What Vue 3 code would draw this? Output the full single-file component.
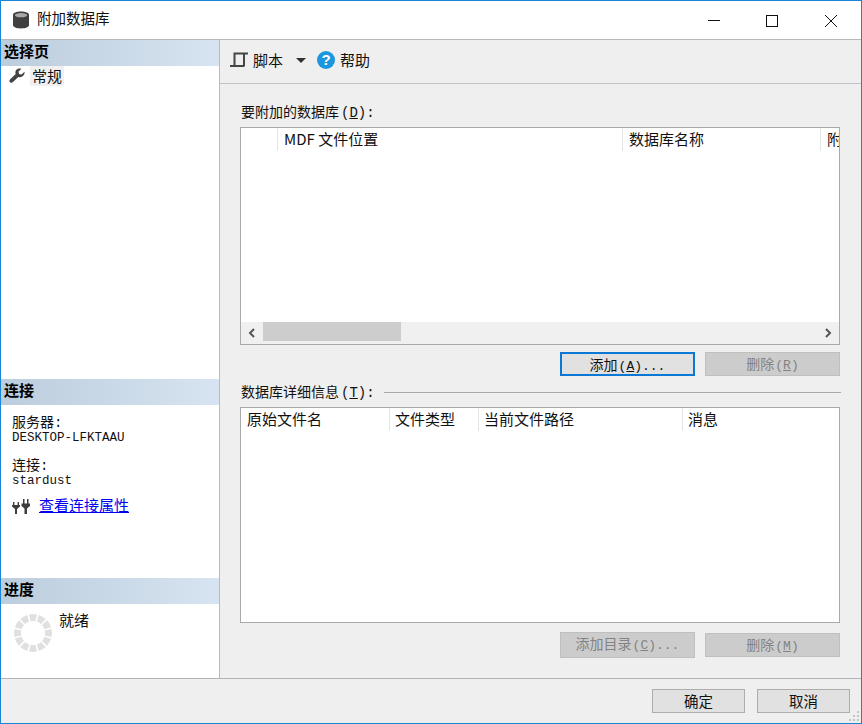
<script setup>
const files = [
  { name: '', w: 37 },
  { name: 'MDF 文件位置', w: 345 },
  { name: '数据库名称', w: 198 },
  { name: '附加为', w: 60 }
]
const details = [
  { name: '原始文件名', w: 149 },
  { name: '文件类型', w: 89 },
  { name: '当前文件路径', w: 204 },
  { name: '消息', w: 170 }
]
const segments = Array.from({ length: 12 }, (_, i) => i * 30)
</script>

<template>
  <div class="window">
    <header class="titlebar">
      <svg class="db-icon" width="18" height="18" viewBox="0 0 18 18">
        <path d="M1 4C1 1.800 4.600.6 9 .6s8 1.200 8 3.400v10c0 2.200-3.600 3.400-8 3.400s-8-1.200-8-3.400z" fill="#404040" />
        <ellipse cx="9" cy="4.200" rx="6.200" ry="2.100" fill="#a8a8a8" />
      </svg>
      <span class="title-text">附加数据库</span>
      <div class="win-controls">
        <svg class="ctl" width="46" height="38" viewBox="0 0 46 38"><path d="M17 19.500h12" stroke="#111" fill="none" /></svg>
        <svg class="ctl ctl-max" width="46" height="38" viewBox="0 0 46 38"><rect x="17.500" y="14.500" width="11" height="11" stroke="#111" fill="none" /></svg>
        <svg class="ctl ctl-close" width="46" height="38" viewBox="0 0 46 38"><path d="M17 14l12 12M29 14l-12 12" stroke="#111" fill="none" /></svg>
      </div>
    </header>

    <div class="body">
      <aside class="sidebar">
        <section class="side-sec sec-pages">
          <h2 class="side-head">选择页</h2>
          <div class="page-item">
            <svg width="16" height="16" viewBox="0 0 16 16">
              <path d="M15.500 3.800 12.500 6.400 10 6 9.600 3.500 12.400.8C10.300 0 8.200.5 7.100 2 6.300 3.200 6.200 4.700 6.700 5.900L1.200 11.200c-1 1-1 2.200-.2 3s2 .8 3-.2L9.300 9c1.300.5 2.800.3 4-.5C15 7.300 16 5.400 15.500 3.800z" fill="#444" />
            </svg>
            <span class="page-name">常规</span>
          </div>
        </section>

        <section class="side-sec sec-conn">
          <h2 class="side-head">连接</h2>
          <div class="conn-body">
            <div class="conn-label">服务器<span class="mono-colon">:</span></div>
            <div class="conn-value">DESKTOP-LFKTAAU</div>
            <div class="conn-label conn-second">连接<span class="mono-colon">:</span></div>
            <div class="conn-value">stardust</div>
            <div class="conn-link-row">
              <svg width="18" height="16" viewBox="0 0 18 16">
                <path d="M1 3h1.400v3H1zM5.600 3H7v3H5.600zM0 6h8v1.500L5 10v5H3v-5L0 7.500zM11 0h1.500v4.500H11zM15 0h1.500v4.500H15zM9.500 4.500H18V7L15 9.500V15h-2.500V9.500L9.500 7z" fill="#3d3d3d" />
              </svg>
              <a class="conn-link">查看连接属性</a>
            </div>
          </div>
        </section>

        <section class="side-sec sec-progress">
          <h2 class="side-head">进度</h2>
          <div class="progress-body">
            <svg class="spinner" width="40" height="40" viewBox="0 0 40 40">
              <path
                v-for="a in segments"
                :key="a"
                d="M16 1.400A19 19 0 0 1 24 1.400L22.400 8.200A12 12 0 0 0 17.600 8.200z"
                fill="#e0e0e0"
                :transform="`rotate(${a} 20 20)`"
              />
            </svg>
            <span class="progress-text">就绪</span>
          </div>
        </section>
      </aside>

      <main class="main">
        <div class="toolbar">
          <svg width="20" height="20" viewBox="0 0 20 20">
            <path d="M5.500 15V3.500H19M15 3.500V16.500M1 16H15" fill="none" stroke="#444" stroke-width="2" />
          </svg>
          <span class="tool-text">脚本</span>
          <span class="caret"></span>
          <span class="help-icon">?</span>
          <span class="tool-text">帮助</span>
        </div>

        <div class="content">
          <div class="label label-first">要附加的数据库<span class="mono">(<u>D</u>):</span></div>
          <div class="table table-files">
            <div class="thead">
              <div v-for="c in files" :key="c.name" class="th" :style="{ width: c.w + 'px' }">{{ c.name }}</div>
            </div>
            <div class="tbody"></div>
            <div class="hscroll">
              <svg width="22" height="22" viewBox="0 0 22 22"><path d="M13 7 9 11l4 4" fill="none" stroke="#555" stroke-width="2" /></svg>
              <div class="thumb"></div>
              <svg width="22" height="22" viewBox="0 0 22 22"><path d="M9 7l4 4-4 4" fill="none" stroke="#555" stroke-width="2" /></svg>
            </div>
          </div>
          <div class="btn-row btn-row-first">
            <button class="btn btn-focus">添加<span class="mono">(<u>A</u>)...</span></button>
            <button class="btn btn-disabled">删除<span class="mono">(<u>R</u>)</span></button>
          </div>

          <div class="label label-rule">
            <span>数据库详细信息<span class="mono">(<u>T</u>):</span></span>
            <span class="rule"></span>
          </div>
          <div class="table table-details">
            <div class="thead">
              <div v-for="c in details" :key="c.name" class="th" :style="{ width: c.w + 'px' }">{{ c.name }}</div>
            </div>
            <div class="tbody"></div>
          </div>
          <div class="btn-row btn-row-second">
            <button class="btn btn-disabled btn-tall">添加目录<span class="mono">(<u>C</u>)...</span></button>
            <button class="btn btn-disabled">删除<span class="mono">(<u>M</u>)</span></button>
          </div>
        </div>
      </main>
    </div>

    <footer class="footer">
      <button class="btn btn-foot">确定</button>
      <button class="btn btn-foot">取消</button>
      <svg class="grip" width="12" height="12" viewBox="0 0 12 12">
        <path d="M8 0h2v2H8zM4 4h2v2H4zM8 4h2v2H8zM0 8h2v2H0zM4 8h2v2H4zM8 8h2v2H8z" fill="#c4c4c4" />
      </svg>
    </footer>
  </div>
</template>

<style scoped>
.window {
  width: 862px;
  height: 724px;
  box-sizing: border-box;
  border: 1px solid #1a85d6;
  background: #efefef;
  display: flex;
  flex-direction: column;
  overflow: hidden;
  color: #111;
  font-family: "Noto Sans CJK SC", "Liberation Sans", sans-serif;
  font-size: 14px;
}
.titlebar {
  height: 38px;
  flex: none;
  box-sizing: border-box;
  background: #fff;
  display: flex;
  align-items: center;
  padding-left: 11px;
}
.title-text {
  margin-left: 7px;
  font-size: 14.500px;
  line-height: 20px;
  margin-bottom: 4px;
}
.win-controls {
  margin-left: auto;
  display: flex;
}
.ctl {
  display: block;
  margin-left: 12px;
}
.ctl-max { margin-left: 12px; }
.ctl-close { margin-left: 13px; margin-right: 7px; }
.body {
  height: 640px;
  flex: none;
  display: flex;
  border-top: 1px solid #b8b8b8;
  border-bottom: 1px solid #b4b4b8;
  box-sizing: border-box;
}
.sidebar {
  width: 219px;
  flex: none;
  box-sizing: border-box;
  background: #fff;
  border-right: 1px solid #b9b9be;
  display: flex;
  flex-direction: column;
}
.side-sec { display: flex; flex-direction: column; }
.sec-pages { height: 339px; }
.sec-conn { height: 199px; }
.sec-progress { height: 99px; }
.side-head {
  height: 26px;
  flex: none;
  margin: 0;
  padding-left: 3px;
  background: linear-gradient(to right, #bccddd, #d7e4f1);
  font-size: 15px;
  font-weight: 700;
  line-height: 22px;
  color: #000;
}
.page-item {
  display: flex;
  align-items: center;
  padding-left: 8px;
  height: 20px;
}
.page-name {
  margin-left: 5px;
  background: #f0f0f0;
  padding: 0 2px;
  line-height: 20px;
  font-size: 15px;
}
.conn-body { padding: 9px 0 0 11px; }
.conn-label { font-size: 14px; line-height: 15px; margin-bottom: 2px; }
.conn-second { margin-top: 13px; }
.conn-value {
  font-family: "Liberation Mono", monospace;
  font-size: 12.500px;
  line-height: 11px;
}
.mono-colon { font-family: "Liberation Mono", monospace; }
.conn-link-row {
  display: flex;
  align-items: center;
  margin-top: 9px;
  height: 22px;
}
.conn-link {
  margin-left: 9px;
  color: #0000ee;
  text-decoration: underline;
  font-size: 15px;
  line-height: 20px;
  margin-bottom: 4px;
}
.progress-body {
  display: flex;
  padding: 6px 0 0 12px;
}
.spinner { display: block; margin-top: 3px; }
.progress-text {
  margin-left: 6px;
  font-size: 15px;
  line-height: 20px;
}
.main {
  width: 641px;
  flex: none;
  display: flex;
  flex-direction: column;
}
.toolbar {
  height: 44px;
  flex: none;
  box-sizing: border-box;
  border-bottom: 1px solid #c2c2c4;
  display: flex;
  align-items: center;
  padding: 0 0 3px 9px;
}
.tool-text { font-size: 15px; line-height: 20px; margin-left: 4px; }
.caret {
  width: 0;
  height: 0;
  border-left: 5px solid transparent;
  border-right: 5px solid transparent;
  border-top: 5px solid #333;
  margin-left: 13px;
  margin-right: 11px;
}
.help-icon {
  width: 18px;
  height: 18px;
  border-radius: 50%;
  background: #1d96e0;
  color: #fff;
  font-family: "Liberation Sans", sans-serif;
  font-weight: 700;
  font-size: 15px;
  line-height: 18px;
  text-align: center;
  margin-right: 1px;
}
.content {
  padding: 0 21px 0 20px;
  display: flex;
  flex-direction: column;
}
.label {
  height: 20px;
  line-height: 20px;
  font-size: 14px;
  padding-left: 1px;
  flex: none;
}
.label-first { margin-top: 17px; margin-bottom: 6px; }
.mono {
  font-family: "Liberation Mono", monospace;
  font-size: 14px;
  margin-left: 2px;
}
.btn .mono {
  font-size: 13px;
  margin-left: 1px;
}
.table {
  width: 600px;
  box-sizing: border-box;
  border: 1px solid #a9a9ae;
  background: #fff;
  display: flex;
  flex-direction: column;
  overflow: hidden;
  flex: none;
}
.table-files { height: 218px; }
.table-details { height: 216px; }
.thead {
  height: 23px;
  flex: none;
  display: flex;
}
.th {
  flex: none;
  box-sizing: border-box;
  border-right: 1px solid #e4e4e4;
  padding-left: 6px;
  font-size: 15px;
  line-height: 22px;
  white-space: nowrap;
  overflow: hidden;
}
.table-details .th + .th { padding-left: 5px; }
.table-details .th:last-child,
.table-files .th:last-child { border-right: 0; }
.tbody { flex: 1; }
.hscroll {
  height: 22px;
  flex: none;
  display: flex;
  background: #f0f0f0;
  align-items: flex-start;
}
.hscroll svg { flex: none; }
.thumb {
  width: 138px;
  height: 19px;
  background: #cdcdcd;
  margin-right: auto;
}
.btn-row {
  display: flex;
  justify-content: flex-end;
  gap: 10px;
  flex: none;
  align-items: center;
}
.btn-row-first { margin-top: 7px; }
.btn-row-second { margin-top: 9px; }
.btn {
  width: 135px;
  height: 24px;
  box-sizing: border-box;
  margin: 0;
  padding: 0;
  font-family: inherit;
  font-size: 14px;
  line-height: 20px;
  color: #111;
  background: #e1e1e1;
  border: 1px solid #adadad;
}
.btn-row .btn { padding-bottom: 2px; }
.btn-focus {
  border: 2px solid #0a78d4;
}
.btn-disabled {
  background: #cccccc;
  border-color: #bfbfbf;
  color: #838383;
}
.btn-tall { height: 26px; }
.label-rule {
  display: flex;
  align-items: center;
  margin-top: 6px;
  margin-bottom: 5px;
}
.rule {
  flex: 1;
  height: 1px;
  background: #a8a8a8;
  margin-left: 9px;
  margin-right: -1px;
}
.footer {
  flex: 1;
  display: flex;
  justify-content: flex-end;
  gap: 12px;
  padding: 10px 11px 0 0;
  position: relative;
}
.btn-foot {
  width: 93px;
  height: 24px;
  font-size: 14.500px;
}
.grip {
  position: absolute;
  right: 0;
  bottom: 0;
}
</style>

<style>
html, body { margin: 0; padding: 0; background: #efefef; }
</style>
